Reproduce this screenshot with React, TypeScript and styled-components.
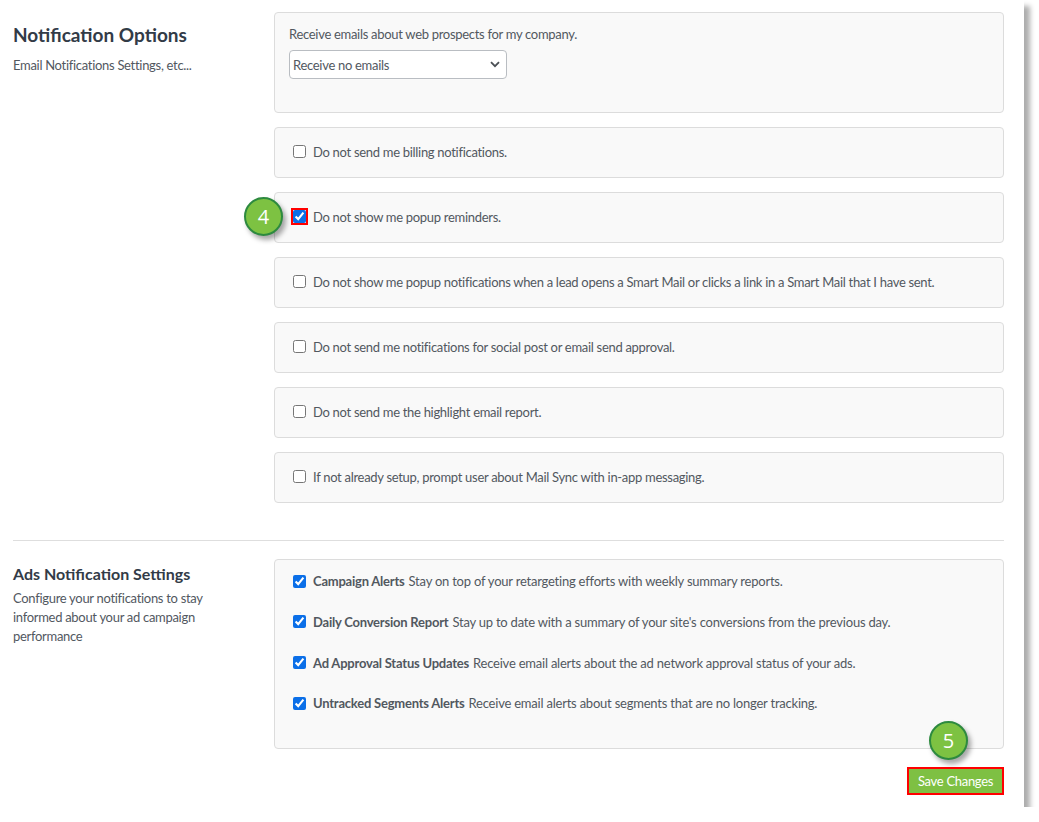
import React from "react";
import styled, { createGlobalStyle } from "styled-components";

const Global = createGlobalStyle`
  html, body { margin: 0; padding: 0; background: #ffffff; }
  body { font-family: Lato, "Open Sans", "Liberation Sans", sans-serif; }
  * { box-sizing: border-box; }
`;

const Page = styled.div`
  width: 1024px;
  height: 807px;
  background: #ffffff;
  box-shadow: 6px 6px 5px rgba(0, 0, 0, 0.32);
  padding: 12px 20px 12px 13px;
  display: flex;
  flex-direction: column;
  color: #52585f;
  font-size: 13px;
  letter-spacing: -0.3px;
`;

const Section = styled.section`
  display: grid;
  grid-template-columns: 261px 730px;
`;

const Side = styled.div<{ $top: number }>`
  padding-top: ${(p) => p.$top}px;
`;

const Title = styled.h2<{ $size: number }>`
  margin: 0;
  font-size: ${(p) => p.$size}px;
  font-weight: 700;
  color: #323b47;
  line-height: 1.2;
  letter-spacing: 0;
`;

const Desc = styled.p<{ $gap: number }>`
  margin: ${(p) => p.$gap}px 0 0;
  max-width: 212px;
  font-size: 13px;
  line-height: 19px;
`;

const Stack = styled.div`
  display: flex;
  flex-direction: column;
  gap: 14px;
`;

const Card = styled.div`
  background: #f9f9f9;
  border: 1px solid #dcdcdc;
  border-radius: 4px;
`;

const SelectCard = styled(Card)`
  height: 101px;
  padding: 12px 14px 0;
`;

const Label = styled.div`
  line-height: 18px;
`;

const SelectWrap = styled.div`
  position: relative;
  margin-top: 7px;
  width: 218px;
  height: 29px;
`;

const Select = styled.select`
  appearance: none;
  width: 100%;
  height: 100%;
  border: 1px solid #b9bdc2;
  border-radius: 4px;
  background: #ffffff;
  font-family: inherit;
  font-size: 13px;
  letter-spacing: -0.3px;
  color: #52585f;
  padding: 0 24px 0 3px;
`;

const Chevron = styled.svg`
  position: absolute;
  right: 7px;
  top: 11px;
  pointer-events: none;
`;

const CheckCard = styled(Card)`
  height: 51px;
  display: flex;
  align-items: center;
  padding: 0 0 2px 18px;
`;

const Check = styled.input<{ $marked?: boolean }>`
  width: 13px;
  height: 13px;
  margin: 0 7px 0 0;
  flex: none;
  accent-color: #0b6fe8;
  outline: ${(p) => (p.$marked ? "2px solid #ff0000" : "none")};
  outline-offset: 0px;
`;

const Row = styled.label`
  display: flex;
  align-items: center;
  line-height: 18px;
`;

const Divider = styled.hr`
  border: none;
  border-top: 1px solid #dedede;
  margin: 37px 0 18px;
  width: 991px;
`;

const AdsCard = styled(Card)`
  height: 190px;
  padding: 12px 0 0 18px;
  display: flex;
  flex-direction: column;
  gap: 22.8px;
  letter-spacing: -0.22px;
`;

const Strong = styled.strong`
  font-weight: 700;
  margin-right: 4px;
`;

const Footer = styled.div`
  display: flex;
  justify-content: flex-end;
  margin-top: 18px;
  width: 991px;
`;

const SaveButton = styled.button`
  position: relative;
  height: 28px;
  width: 97px;
  border: 2px solid #ff0000;
  background: #7ec043;
  color: #ffffff;
  font-family: inherit;
  font-size: 13px;
  letter-spacing: -0.3px;
  padding: 0;
  cursor: pointer;
`;

const Badge = styled.span<{ $left: number; $top: number }>`
  position: absolute;
  left: ${(p) => p.$left}px;
  top: ${(p) => p.$top}px;
  width: 39px;
  height: 39px;
  border-radius: 50%;
  background: #7dc242;
  border: 2px solid #2d8a3f;
  box-shadow: 3px 4px 5px rgba(0, 0, 0, 0.35);
  color: #ffffff;
  font-size: 20px;
  letter-spacing: 0;
  display: flex;
  align-items: center;
  justify-content: center;
  font-family: "Open Sans", Lato, sans-serif;
`;

const Anchor = styled.div`
  position: relative;
`;

const checks = [
  "Do not send me billing notifications.",
  "Do not show me popup reminders.",
  "Do not show me popup notifications when a lead opens a Smart Mail or clicks a link in a Smart Mail that I have sent.",
  "Do not send me notifications for social post or email send approval.",
  "Do not send me the highlight email report.",
  "If not already setup, prompt user about Mail Sync with in-app messaging.",
];

const ads = [
  ["Campaign Alerts", "Stay on top of your retargeting efforts with weekly summary reports."],
  ["Daily Conversion Report", "Stay up to date with a summary of your site's conversions from the previous day."],
  ["Ad Approval Status Updates", "Receive email alerts about the ad network approval status of your ads."],
  ["Untracked Segments Alerts", "Receive email alerts about segments that are no longer tracking."],
];

export default function App() {
  return (
    <>
      <Global />
      <Page>
        <Section>
          <Side $top={12}>
            <Title $size={19}>Notification Options</Title>
            <Desc $gap={9}>Email Notifications Settings, etc...</Desc>
          </Side>
          <Stack>
            <SelectCard>
              <Label>Receive emails about web prospects for my company.</Label>
              <SelectWrap>
                <Select defaultValue="none">
                  <option value="none">Receive no emails</option>
                  <option value="daily">Receive daily emails</option>
                </Select>
                <Chevron width="10" height="7" viewBox="0 0 10 7">
                  <path d="M1 1.2 L5 5.2 L9 1.2" fill="none" stroke="#4a4f55" strokeWidth="1.8" />
                </Chevron>
              </SelectWrap>
            </SelectCard>
            {checks.map((t, i) => (
              <Anchor key={t}>
                <CheckCard>
                  <Row>
                    <Check type="checkbox" defaultChecked={i === 1} $marked={i === 1} />
                    {t}
                  </Row>
                </CheckCard>
                {i === 1 && (
                  <Badge $left={-30} $top={5}>
                    4
                  </Badge>
                )}
              </Anchor>
            ))}
          </Stack>
        </Section>
        <Divider />
        <Section>
          <Side $top={5}>
            <Title $size={16}>Ads Notification Settings</Title>
            <Desc $gap={6}>Configure your notifications to stay informed about your ad campaign performance</Desc>
          </Side>
          <AdsCard>
            {ads.map(([b, t]) => (
              <Row key={b}>
                <Check type="checkbox" defaultChecked />
                <span>
                  <Strong>{b}</Strong>
                  {t}
                </span>
              </Row>
            ))}
          </AdsCard>
        </Section>
        <Footer>
          <Anchor>
            <SaveButton type="button">Save Changes</SaveButton>
            <Badge $left={22} $top={-46}>
              5
            </Badge>
          </Anchor>
        </Footer>
      </Page>
    </>
  );
}
